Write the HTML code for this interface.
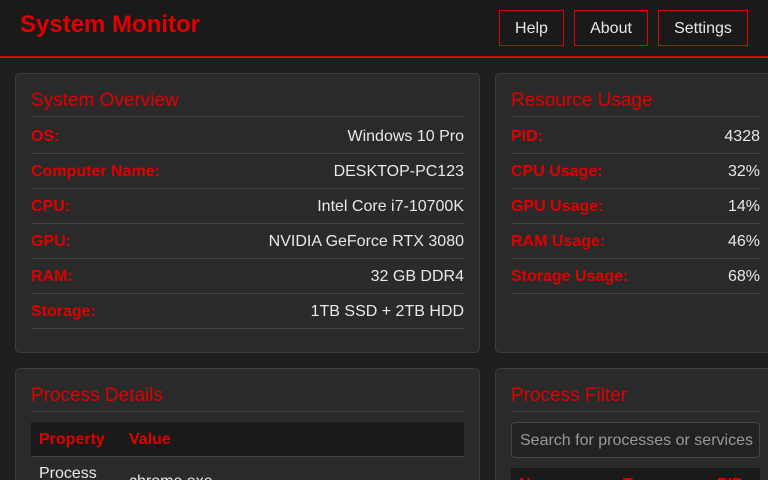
<!DOCTYPE html>
<html><head><style>
*{margin:0;padding:0;box-sizing:border-box}
html,body{width:768px;height:480px;overflow:hidden}
body{background:#1e1e1e;font-family:"Liberation Sans",sans-serif;color:#e8e8e8;position:relative}
.hdr{position:absolute;left:0;top:0;width:768px;height:58px;background:#1a1a1a;border-bottom:2px solid #e00000}
.hdr h1{position:absolute;left:20px;top:11px;font-size:24px;color:#e00000;font-weight:bold}
.btn{position:absolute;top:10px;height:36px;border:1px solid #e00000;color:#e8e8e8;font-size:16px;line-height:36px;text-align:center}
.card{position:absolute;background:#2a2a2a;border:1px solid #3c3c3c;border-radius:5px;padding:0 15px}
.card h2{font-weight:normal;font-size:19px;color:#e00000;height:43px;padding-top:16px;border-bottom:1px solid #444;margin-bottom:2px}
.row{height:35px;border-bottom:1px solid #444;display:flex;justify-content:space-between;align-items:center;font-size:16px;padding-top:2px}
.row b{color:#e00000}
</style></head><body>
<div class="hdr"><h1>System Monitor</h1>
<div class="btn" style="left:499px;width:65px">Help</div>
<div class="btn" style="left:574px;width:74px">About</div>
<div class="btn" style="left:658px;width:90px">Settings</div></div>

<div class="card" style="left:15px;top:73px;width:465px;height:280px">
<h2>System Overview</h2>
<div class="row"><b>OS:</b><span>Windows 10 Pro</span></div>
<div class="row"><b>Computer Name:</b><span>DESKTOP-PC123</span></div>
<div class="row"><b>CPU:</b><span>Intel Core i7-10700K</span></div>
<div class="row"><b>GPU:</b><span>NVIDIA GeForce RTX 3080</span></div>
<div class="row"><b>RAM:</b><span>32 GB DDR4</span></div>
<div class="row"><b>Storage:</b><span>1TB SSD + 2TB HDD</span></div>
</div>

<div class="card" style="left:495px;top:73px;width:281px;height:280px">
<h2>Resource Usage</h2>
<div class="row"><b>PID:</b><span>4328</span></div>
<div class="row"><b>CPU Usage:</b><span>32%</span></div>
<div class="row"><b>GPU Usage:</b><span>14%</span></div>
<div class="row"><b>RAM Usage:</b><span>46%</span></div>
<div class="row"><b>Storage Usage:</b><span>68%</span></div>
</div>

<div class="card" style="left:15px;top:368px;width:465px;height:112px;border-bottom:none;border-radius:5px 5px 0 0">
<h2 style="margin-bottom:0">Process Details</h2>
<div style="margin-top:10px;height:35px;background:#1a1a1a;border-bottom:1px solid #444;font-size:16px;font-weight:bold;color:#e00000;position:relative">
<span style="position:absolute;left:8px;top:9px">Property</span><span style="position:absolute;left:98px;top:9px">Value</span></div>
<div style="position:relative;font-size:16px"><span style="position:absolute;left:8px;top:8px">Process</span><span style="position:absolute;left:98px;top:16px">chrome.exe</span></div>
</div>

<div class="card" style="left:495px;top:368px;width:281px;height:112px;border-bottom:none;border-radius:5px 5px 0 0">
<h2 style="margin-bottom:0">Process Filter</h2>
<div style="margin-top:10px;height:36px;width:249px;background:#222;border:1px solid #444;border-radius:4px;color:#999;font-size:16px;padding:9px 8px;white-space:nowrap;overflow:hidden">Search for processes or services</div>
<div style="margin-top:10px;height:35px;width:249px;background:#1a1a1a;color:#e00000;font-weight:bold;font-size:16px;position:relative">
<span style="position:absolute;left:8px;top:8px">Name</span><span style="position:absolute;left:112px;top:8px">Type</span><span style="position:absolute;left:206px;top:8px">PID</span></div>
</div>
</body></html>
